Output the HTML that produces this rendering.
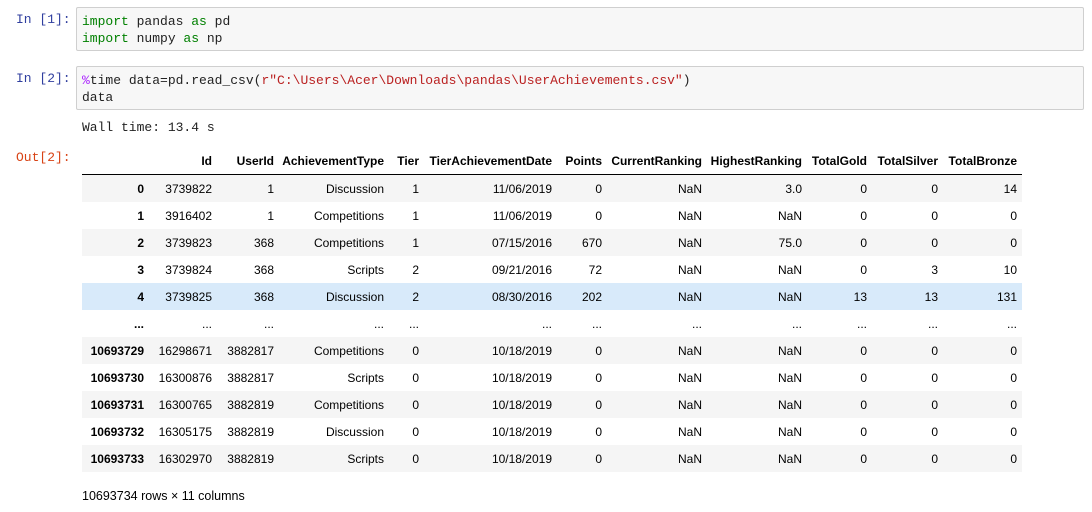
<!DOCTYPE html>
<html><head><meta charset="utf-8"><style>
body{margin:0;width:1092px;height:512px;background:#fff;position:relative;overflow:hidden;font-family:"Liberation Sans",Arial,sans-serif;}
.mono{font-family:"Liberation Mono",monospace;font-size:13px;}
.prompt{position:absolute;left:16px;color:#303f9f;}
.cell{position:absolute;left:76px;width:1008px;height:44px;background:#f7f7f7;border:1px solid #cfcfcf;border-radius:2px;box-sizing:border-box;padding:5px 0 0 5px;line-height:17px;color:#222;}
.kw{color:#008000;}
.mg{color:#aa22ff;}
.st{color:#ba2121;}
table{position:absolute;left:82px;top:148px;border-collapse:collapse;table-layout:fixed;width:940px;font-size:12px;color:#000;}
th{font-weight:bold;text-align:right;padding:0 5px 0 0;height:26px;vertical-align:middle;white-space:nowrap;}
thead th{border-bottom:1px solid #000;}
td{text-align:right;padding:0 5px 0 0;height:27px;white-space:nowrap;}
tbody tr:nth-child(odd){background:#f5f5f5;}
tbody tr.hl{background:#d8eafa;}
</style></head><body>
<div class="prompt mono" style="top:12px">In [1]:</div>
<div class="cell mono" style="top:7px">
<span class="kw">import</span> pandas <span class="kw">as</span> pd<br><span class="kw">import</span> numpy <span class="kw">as</span> np</div>
<div class="prompt mono" style="top:71px">In [2]:</div>
<div class="cell mono" style="top:66px">
<span class="mg">%</span>time data=pd.read_csv(<span class="st">r"C:\Users\Acer\Downloads\pandas\UserAchievements.csv"</span>)<br>data</div>
<div class="mono" style="position:absolute;left:82px;top:120px;color:#222">Wall time: 13.4 s</div>
<div class="mono" style="position:absolute;left:16px;top:150px;color:#d84315">Out[2]:</div>
<table>
<colgroup><col style="width:67px"><col style="width:68px"><col style="width:62px"><col style="width:110px"><col style="width:35px"><col style="width:133px"><col style="width:50px"><col style="width:100px"><col style="width:100px"><col style="width:65px"><col style="width:71px"><col style="width:79px"></colgroup>
<thead><tr><th></th><th>Id</th><th>UserId</th><th>AchievementType</th><th>Tier</th><th>TierAchievementDate</th><th>Points</th><th>CurrentRanking</th><th>HighestRanking</th><th>TotalGold</th><th>TotalSilver</th><th>TotalBronze</th></tr></thead>
<tbody>
<tr><th>0</th><td>3739822</td><td>1</td><td>Discussion</td><td>1</td><td>11/06/2019</td><td>0</td><td>NaN</td><td>3.0</td><td>0</td><td>0</td><td>14</td></tr>
<tr><th>1</th><td>3916402</td><td>1</td><td>Competitions</td><td>1</td><td>11/06/2019</td><td>0</td><td>NaN</td><td>NaN</td><td>0</td><td>0</td><td>0</td></tr>
<tr><th>2</th><td>3739823</td><td>368</td><td>Competitions</td><td>1</td><td>07/15/2016</td><td>670</td><td>NaN</td><td>75.0</td><td>0</td><td>0</td><td>0</td></tr>
<tr><th>3</th><td>3739824</td><td>368</td><td>Scripts</td><td>2</td><td>09/21/2016</td><td>72</td><td>NaN</td><td>NaN</td><td>0</td><td>3</td><td>10</td></tr>
<tr class="hl"><th>4</th><td>3739825</td><td>368</td><td>Discussion</td><td>2</td><td>08/30/2016</td><td>202</td><td>NaN</td><td>NaN</td><td>13</td><td>13</td><td>131</td></tr>
<tr><th>...</th><td>...</td><td>...</td><td>...</td><td>...</td><td>...</td><td>...</td><td>...</td><td>...</td><td>...</td><td>...</td><td>...</td></tr>
<tr><th>10693729</th><td>16298671</td><td>3882817</td><td>Competitions</td><td>0</td><td>10/18/2019</td><td>0</td><td>NaN</td><td>NaN</td><td>0</td><td>0</td><td>0</td></tr>
<tr><th>10693730</th><td>16300876</td><td>3882817</td><td>Scripts</td><td>0</td><td>10/18/2019</td><td>0</td><td>NaN</td><td>NaN</td><td>0</td><td>0</td><td>0</td></tr>
<tr><th>10693731</th><td>16300765</td><td>3882819</td><td>Competitions</td><td>0</td><td>10/18/2019</td><td>0</td><td>NaN</td><td>NaN</td><td>0</td><td>0</td><td>0</td></tr>
<tr><th>10693732</th><td>16305175</td><td>3882819</td><td>Discussion</td><td>0</td><td>10/18/2019</td><td>0</td><td>NaN</td><td>NaN</td><td>0</td><td>0</td><td>0</td></tr>
<tr><th>10693733</th><td>16302970</td><td>3882819</td><td>Scripts</td><td>0</td><td>10/18/2019</td><td>0</td><td>NaN</td><td>NaN</td><td>0</td><td>0</td><td>0</td></tr>
</tbody></table>
<div style="position:absolute;left:82px;top:489px;font-size:12.5px;color:#000">10693734 rows × 11 columns</div>
</body></html>
